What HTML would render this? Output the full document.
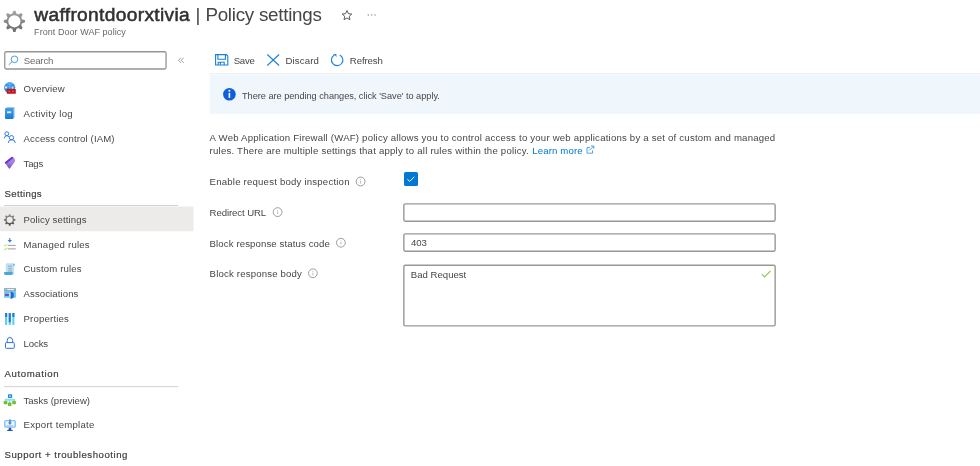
<!DOCTYPE html>
<html lang="en">
<head>
<meta charset="utf-8">
<title>waffrontdoorxtivia | Policy settings</title>
<style>
html,body{margin:0;padding:0;background:#fff;}
body{width:980px;height:466px;position:relative;overflow:hidden;font-family:"Liberation Sans",Arial,sans-serif;}
.t{position:absolute;white-space:pre;line-height:1;font-family:"Liberation Sans",Arial,sans-serif;}
.box{position:absolute;box-sizing:border-box;}
.inp{position:absolute;box-sizing:border-box;border:1px solid #a3a2a0;border-radius:2px;background:#fff;}
svg{position:absolute;overflow:visible;}
.hr{position:absolute;height:1px;background:#d2d0ce;}
</style>
</head>
<body>
<!-- checkbox -->
<div class="box" style="left:404.2px;top:172.1px;width:13.7px;height:13.7px;background:#0078d4;border-radius:1.6px"></div>
<svg style="left:404.2px;top:172.1px" width="13.7" height="13.7" viewBox="0 0 13.7 13.7"><path d="M3.4 7.3 L5.7 9.4 L10.3 4.8" fill="none" stroke="#fff" stroke-width="1"/></svg>

<svg width="980" height="466" viewBox="0 0 980 466" style="left:0;top:0">
<defs>
<linearGradient id="gg" x1="0" y1="0" x2="0" y2="1"><stop offset="0" stop-color="#a6a6a6"/><stop offset="1" stop-color="#6a6a6a"/></linearGradient>
<linearGradient id="gb" x1="0" y1="0" x2="0" y2="1"><stop offset="0" stop-color="#3f9fec"/><stop offset="1" stop-color="#187bd4"/></linearGradient>
<linearGradient id="gp" x1="0.6" y1="0" x2="0.4" y2="1"><stop offset="0" stop-color="#b48ce2"/><stop offset="0.5" stop-color="#a47ddc"/><stop offset="1" stop-color="#7248cf"/></linearGradient>
<linearGradient id="gg2" x1="0" y1="0" x2="0" y2="1"><stop offset="0" stop-color="#909090"/><stop offset="1" stop-color="#4c4c4c"/></linearGradient>
<linearGradient id="gc" x1="0" y1="0" x2="0" y2="1"><stop offset="0" stop-color="#2f8be6"/><stop offset="1" stop-color="#1a6bd0"/></linearGradient>
</defs>
<rect x="0" y="206.5" width="193.5" height="24.7" fill="#edebe9"/>
<rect x="4" y="205.1" width="174.2" height="0.9" fill="#cfcdcb"/>
<rect x="4" y="386.2" width="174.2" height="0.9" fill="#cfcdcb"/>
<rect x="209.6" y="73.3" width="771" height="0.9" fill="#e9e9e9"/>
<rect x="209.6" y="74.7" width="771" height="39.1" fill="#eff6fc"/>
<rect x="4.75" y="51.75" width="161.3" height="17.25" rx="1.4" fill="#fff" stroke="#979593" stroke-width="1.3"/>
<rect x="403.85" y="203.85" width="371.3" height="17.4" rx="1.4" fill="#fff" stroke="#9a9896" stroke-width="1.4"/>
<rect x="403.85" y="233.85" width="371.3" height="17.4" rx="1.4" fill="#fff" stroke="#9a9896" stroke-width="1.4"/>
<rect x="403.85" y="265.2" width="371.3" height="60.7" rx="1.4" fill="#fff" stroke="#9a9896" stroke-width="1.4"/>
<path d="M761.8 274.2L764.6 276.9L770.6 270.9" fill="none" stroke="#8cc84b" stroke-width="1.1"/>
<path d="M16.55 13.80L15.43 10.65L13.37 10.65L12.25 13.80A7.80 7.80 0 0 0 10.62 14.48L7.59 13.04L6.14 14.49L7.58 17.52A7.80 7.80 0 0 0 6.90 19.15L3.75 20.27L3.75 22.33L6.90 23.45A7.80 7.80 0 0 0 7.58 25.08L6.14 28.11L7.59 29.56L10.62 28.12A7.80 7.80 0 0 0 12.25 28.80L13.37 31.95L15.43 31.95L16.55 28.80A7.80 7.80 0 0 0 18.18 28.12L21.21 29.56L22.66 28.11L21.22 25.08A7.80 7.80 0 0 0 21.90 23.45L25.05 22.33L25.05 20.27L21.90 19.15A7.80 7.80 0 0 0 21.22 17.52L22.66 14.49L21.21 13.04L18.18 14.48A7.80 7.80 0 0 0 16.55 13.80ZM8.30 21.30a6.10 6.10 0 1 0 12.20 0a6.10 6.10 0 1 0 -12.20 0Z" fill="url(#gg)" fill-rule="evenodd"/>
<polygon points="347.00,10.60 345.59,13.66 342.24,14.05 344.72,16.34 344.06,19.65 347.00,18.00 349.94,19.65 349.28,16.34 351.76,14.05 348.41,13.66" fill="none" stroke="#4a4846" stroke-width="0.9"/>
<rect x="367.7" y="14.4" width="1.2" height="1.2" fill="#8a8886"/>
<rect x="371.1" y="14.4" width="1.2" height="1.2" fill="#8a8886"/>
<rect x="374.5" y="14.4" width="1.2" height="1.2" fill="#8a8886"/>
<g fill="none" stroke="#4a9fe6" stroke-width="1"><circle cx="14.5" cy="59.3" r="3.3"/><path d="M12.1 61.7L8.7 64.9"/></g>
<path d="M180.9 57.7L178.4 60.3L180.9 62.9M183.7 57.7L181.2 60.3L183.7 62.9" fill="none" stroke="#8a8886" stroke-width="0.8"/>
<circle cx="9.7" cy="87.6" r="5.6" fill="url(#gb)"/>
<path d="M9.7 82.2v6.5M4.4 86.2q5.3 1.6 10.6 0M6.2 83.6q3.5 1.6 7 0" fill="none" stroke="#8cc8f5" stroke-width="0.7" opacity="0.8"/><ellipse cx="6" cy="87.5" rx="1.3" ry="1" fill="#eaf5fd" opacity="0.9"/><ellipse cx="12.6" cy="87.9" rx="1.1" ry="0.8" fill="#eaf5fd" opacity="0.85"/>
<rect x="6.8" y="88.9" width="9" height="4.9" rx="0.5" fill="#c4161c"/>
<path d="M8.6 91.4h1.4M12.2 91.4h1.4" fill="none" stroke="#ff6a78" stroke-width="1"/>
<rect x="6.4" y="107.1" width="8.3" height="10.8" rx="0.7" fill="#9ccbf0"/>
<rect x="5.05" y="107.9" width="8.4" height="11" rx="0.7" fill="url(#gb)"/>
<rect x="7" y="111.3" width="4.2" height="2" rx="0.4" fill="#d8ebfb"/>
<g fill="none" stroke="#2b7be4" stroke-width="1"><circle cx="6.8" cy="133.7" r="1.95"/><path d="M4.3 138.3A2.8 2.8 0 0 1 6.8 135.7Q8.2 135.8 9 136.9"/><circle cx="11.5" cy="137.7" r="2.15"/><path d="M8.2 143A3.56 3.56 0 0 1 15.3 143"/></g>
<path d="M4.7 162.5L11.6 157Q12.3 156.6 13 157.2L14.6 158.8Q15.4 160 15 161.4L9.9 168.5Q9.3 169 8.8 168.3Z" fill="url(#gp)"/><path d="M4.7 162.5L11.6 157Q12.2 156.7 12.7 157L13.4 158L5.8 164Z" fill="#5a2dd2" opacity="0.9"/>
<path d="M10.89 215.77L10.41 214.14L8.99 214.14L8.51 215.77A4.30 4.30 0 0 0 7.62 216.14L6.13 215.33L5.13 216.33L5.94 217.82A4.30 4.30 0 0 0 5.57 218.71L3.94 219.19L3.94 220.61L5.57 221.09A4.30 4.30 0 0 0 5.94 221.98L5.13 223.47L6.13 224.47L7.62 223.66A4.30 4.30 0 0 0 8.51 224.03L8.99 225.66L10.41 225.66L10.89 224.03A4.30 4.30 0 0 0 11.78 223.66L13.27 224.47L14.27 223.47L13.46 221.98A4.30 4.30 0 0 0 13.83 221.09L15.46 220.61L15.46 219.19L13.83 218.71A4.30 4.30 0 0 0 13.46 217.82L14.27 216.33L13.27 215.33L11.78 216.14A4.30 4.30 0 0 0 10.89 215.77ZM6.65 219.90a3.05 3.05 0 1 0 6.10 0a3.05 3.05 0 1 0 -6.10 0Z" fill="url(#gg2)" fill-rule="evenodd"/>
<path d="M9.3 238.1h1v1.8h1.7L9.8 242.6L7.6 239.9h1.7Z" fill="#1f7fe0"/>
<g fill="none" stroke="#a9d142" stroke-width="0.9"><path d="M4.1 245.3l1.1 .9l2-2"/><path d="M4.1 248.9l1.1 .9l2-2"/></g>
<path d="M7.8 245.4h7.9" stroke="#a6a6a6" stroke-width="1.1"/><path d="M7.8 248.8h7.9" stroke="#c2c2c2" stroke-width="1.7"/>
<path d="M5.8 264.2Q5.8 263.3 6.8 263.3H13.4Q14.9 263.4 14.8 264.9Q14.6 265.7 14.1 265.6V274.7H5.8Z" fill="#bde0f6"/>
<circle cx="13.9" cy="264.7" r="0.9" fill="#64b6ea"/>
<path d="M4.1 272.7Q4.1 272 4.8 272H12.6V273.6Q12.6 274.9 11.4 274.9H5.4Q4.1 274.9 4.1 273.6Z" fill="#48a5e2"/>
<g stroke="#97a3ad" stroke-width="1.1"><path d="M8.1 266.2h3.9M8.1 268.8h3.9M8.1 271h3.9"/></g>
<rect x="4.1" y="288.3" width="11.8" height="9.4" fill="#6cc5f1"/>
<rect x="4.1" y="288.3" width="11.8" height="2.5" fill="#9ba1a7"/>
<rect x="7.2" y="289" width="6.9" height="1.1" fill="#f2f2f2"/>
<rect x="4.6" y="288.8" width="1.6" height="1.5" fill="#7fcdf5"/>
<path d="M9.3 292.9L10.7 292.5V297L9.3 296.4Z" fill="#e8f5fd"/>
<path d="M10.65 291.6L13.7 292.9V297.6L10.65 299.3Z" fill="#1a6cd4"/>
<rect x="5" y="294" width="3.9" height="1.9" fill="#7d42b4"/>
<rect x="5.05" y="312.9" width="2.15" height="12" rx="0.3" fill="#5ad2f5"/>
<rect x="5.05" y="312.9" width="2.15" height="4.1" rx="0.3" fill="#267adb"/>
<rect x="8.7" y="312.9" width="2.15" height="12" rx="0.3" fill="#5ad2f5"/>
<rect x="8.7" y="312.9" width="2.15" height="9.3" rx="0.3" fill="#267adb"/>
<rect x="12.3" y="312.9" width="2.15" height="12" rx="0.3" fill="#5ad2f5"/>
<rect x="12.3" y="312.9" width="2.15" height="4.1" rx="0.3" fill="#267adb"/>
<g fill="none" stroke="#2d6fe0" stroke-width="1"><rect x="5.5" y="342.6" width="8.8" height="5.7" rx="0.8"/><path d="M7.2 342.6v-2.2a2.7 2.9 0 0 1 5.4 0v2.2"/></g>
<path d="M4.7 398.7h10.4v2.6h-1.7v-.6h-3v2.3h-1.4v-2.3h-2.6v.6H4.7Z" fill="#86e0f8"/>
<rect x="7.95" y="394.3" width="4.25" height="3.8" rx="0.8" fill="#2a80e0"/>
<path d="M9.5 395.1L11.3 396.2L9.5 397.3Z" fill="#fff"/>
<rect x="3.7" y="400.9" width="3.7" height="3.4" rx="0.4" fill="#76c02a"/>
<rect x="7.95" y="402.6" width="3.5" height="3.3" rx="0.4" fill="#76c02a"/>
<rect x="12.2" y="400.9" width="3.7" height="3.4" rx="0.4" fill="#76c02a"/>
<rect x="4.8" y="420.6" width="10.4" height="6.5" rx="0.8" fill="#eef6fd" stroke="#7fc3f5" stroke-width="1.4"/>
<path d="M9.1 419.6h1.7v3h1.2L9.95 424.9L7.9 422.6h1.2Z" fill="#3a8ee8"/>
<rect x="6.1" y="425.3" width="7.3" height="1.2" fill="#bdbdbd"/>
<path d="M8.9 427.8h2.1l.5 2.1h1.2v1H7.1v-1h1.3Z" fill="#2058b8"/>
<g fill="none" stroke="#1a80d9" stroke-width="1.1"><path d="M215.6 54.6h10.8l1.4 1.4v9h-12.2Z"/><path d="M217.9 54.6v4.6h7.5v-4.6"/><path d="M218.2 65v-2.8h6v2.8M220.4 62.4v2.4"/></g>
<path d="M267.3 54.5L279.1 65.5M279.1 54.5L267.3 65.5" fill="none" stroke="#1f84dc" stroke-width="1.15"/>
<path d="M339.7 54.9A5.7 5.7 0 1 1 334.4 55" fill="none" stroke="#1f84dc" stroke-width="1.15"/><path d="M333 53.9h3.4v3.3l-1.1-1.6Z" fill="#1f84dc"/>
<circle cx="229.4" cy="94.3" r="6.3" fill="#0f5fd8"/>
<rect x="228.6" y="92.9" width="1.6" height="5" fill="#fff"/><circle cx="229.4" cy="90.8" r="1" fill="#fff"/>
<circle cx="360.6" cy="181.5" r="4.4" fill="none" stroke="#8c8c8c" stroke-width="0.85"/>
<path d="M360.6 180.9v2.6M360.6 179.4v0.8" stroke="#a6a6a6" stroke-width="0.8"/>
<circle cx="277.6" cy="212.1" r="4.4" fill="none" stroke="#8c8c8c" stroke-width="0.85"/>
<path d="M277.6 211.5v2.6M277.6 210.0v0.8" stroke="#a6a6a6" stroke-width="0.8"/>
<circle cx="340.9" cy="242.7" r="4.4" fill="none" stroke="#8c8c8c" stroke-width="0.85"/>
<path d="M340.9 242.1v2.6M340.9 240.6v0.8" stroke="#a6a6a6" stroke-width="0.8"/>
<circle cx="312.9" cy="273.3" r="4.4" fill="none" stroke="#8c8c8c" stroke-width="0.85"/>
<path d="M312.9 272.7v2.6M312.9 271.2v0.8" stroke="#a6a6a6" stroke-width="0.8"/>
<g fill="none" stroke="#2b8ce0" stroke-width="0.8"><path d="M590 147.6h-3v5.6h5.6v-3"/><path d="M589.4 150.4L593.6 146.2M591 146h2.8v2.8"/></g>
</svg>

<div id="txt" style="position:absolute;left:0;top:0;width:980px;height:466px;will-change:transform">
<span class="t" style="left:34.3px;top:5.00px;font-size:19.2px;font-weight:400;color:#323130;letter-spacing:0.317px;-webkit-text-stroke:0.55px #323130">waffrontdoorxtivia</span>
<span class="t" style="left:195.4px;top:6.00px;font-size:18.6px;font-weight:400;color:#484644;letter-spacing:0.000px">|</span>
<span class="t" style="left:205.4px;top:6.00px;font-size:18.8px;font-weight:400;color:#484644;letter-spacing:-0.254px">Policy settings</span>
<span class="t" style="left:34.1px;top:28.00px;font-size:9.0px;font-weight:400;color:#6a6866;letter-spacing:0.051px">Front Door WAF policy</span>
<span class="t" style="left:23.8px;top:56.00px;font-size:9.6px;font-weight:400;color:#6a6866;letter-spacing:-0.168px">Search</span>
<span class="t" style="left:23.5px;top:84.00px;font-size:9.6px;font-weight:400;color:#484644;letter-spacing:0.183px">Overview</span>
<span class="t" style="left:23.5px;top:109.00px;font-size:9.6px;font-weight:400;color:#484644;letter-spacing:0.300px">Activity log</span>
<span class="t" style="left:23.5px;top:134.00px;font-size:9.6px;font-weight:400;color:#484644;letter-spacing:0.135px">Access control (IAM)</span>
<span class="t" style="left:23.5px;top:159.00px;font-size:9.6px;font-weight:400;color:#484644;letter-spacing:-0.167px">Tags</span>
<span class="t" style="left:4.5px;top:189.00px;font-size:9.6px;font-weight:400;color:#3f3e3c;letter-spacing:0.356px;-webkit-text-stroke:0.18px #3f3e3c">Settings</span>
<span class="t" style="left:23.5px;top:215.00px;font-size:9.6px;font-weight:400;color:#484644;letter-spacing:0.124px">Policy settings</span>
<span class="t" style="left:23.5px;top:240.00px;font-size:9.6px;font-weight:400;color:#484644;letter-spacing:0.225px">Managed rules</span>
<span class="t" style="left:23.5px;top:264.00px;font-size:9.6px;font-weight:400;color:#484644;letter-spacing:0.132px">Custom rules</span>
<span class="t" style="left:23.5px;top:289.00px;font-size:9.6px;font-weight:400;color:#484644;letter-spacing:0.091px">Associations</span>
<span class="t" style="left:23.5px;top:314.00px;font-size:9.6px;font-weight:400;color:#484644;letter-spacing:0.181px">Properties</span>
<span class="t" style="left:23.5px;top:339.00px;font-size:9.6px;font-weight:400;color:#484644;letter-spacing:-0.100px">Locks</span>
<span class="t" style="left:4.5px;top:369.00px;font-size:9.6px;font-weight:400;color:#3f3e3c;letter-spacing:0.626px;-webkit-text-stroke:0.18px #3f3e3c">Automation</span>
<span class="t" style="left:23.5px;top:396.00px;font-size:9.6px;font-weight:400;color:#484644;letter-spacing:-0.005px">Tasks (preview)</span>
<span class="t" style="left:23.5px;top:420.00px;font-size:9.6px;font-weight:400;color:#484644;letter-spacing:0.261px">Export template</span>
<span class="t" style="left:4.5px;top:450.00px;font-size:9.6px;font-weight:400;color:#3f3e3c;letter-spacing:0.529px;-webkit-text-stroke:0.18px #3f3e3c">Support + troubleshooting</span>
<span class="t" style="left:233.7px;top:56.00px;font-size:9.6px;font-weight:400;color:#484644;letter-spacing:-0.237px">Save</span>
<span class="t" style="left:285.4px;top:56.00px;font-size:9.6px;font-weight:400;color:#484644;letter-spacing:0.155px">Discard</span>
<span class="t" style="left:349.8px;top:56.00px;font-size:9.6px;font-weight:400;color:#484644;letter-spacing:-0.088px">Refresh</span>
<span class="t" style="left:242.0px;top:92.00px;font-size:9.2px;font-weight:400;color:#484644;letter-spacing:-0.023px">There are pending changes, click 'Save' to apply.</span>
<span class="t" style="left:209.6px;top:133.00px;font-size:9.6px;font-weight:400;color:#484644;letter-spacing:0.211px">A Web Application Firewall (WAF) policy allows you to control access to your web applications by a set of custom and managed</span>
<span class="t" style="left:209.6px;top:146.00px;font-size:9.6px;font-weight:400;color:#484644;letter-spacing:0.225px">rules. There are multiple settings that apply to all rules within the policy.</span>
<span class="t" style="left:532.3px;top:146.00px;font-size:9.6px;font-weight:400;color:#0078d4;letter-spacing:0.134px">Learn more</span>
<span class="t" style="left:209.6px;top:177.00px;font-size:9.6px;font-weight:400;color:#484644;letter-spacing:0.207px">Enable request body inspection</span>
<span class="t" style="left:209.6px;top:208.00px;font-size:9.6px;font-weight:400;color:#484644;letter-spacing:-0.094px">Redirect URL</span>
<span class="t" style="left:209.6px;top:239.00px;font-size:9.6px;font-weight:400;color:#484644;letter-spacing:0.117px">Block response status code</span>
<span class="t" style="left:209.6px;top:269.00px;font-size:9.6px;font-weight:400;color:#484644;letter-spacing:0.178px">Block response body</span>
<span class="t" style="left:411.0px;top:238.00px;font-size:9.6px;font-weight:400;color:#484644;letter-spacing:-0.076px">403</span>
<span class="t" style="left:410.8px;top:270.00px;font-size:9.6px;font-weight:400;color:#484644;letter-spacing:-0.000px">Bad Request</span>
</div>
</body>
</html>
